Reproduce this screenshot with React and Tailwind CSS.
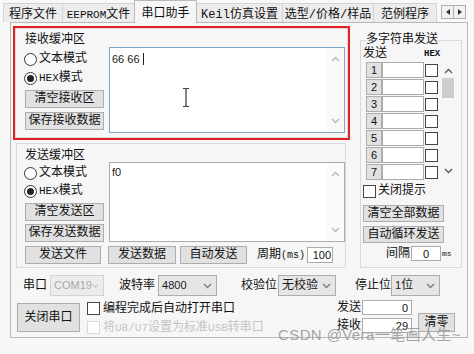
import React from 'react';

function ChevUp({ color = '#a8a8a8' }) {
  return (
    <svg width="9" height="6" viewBox="0 0 9 6">
      <path d="M1 5 L4.5 1.5 L8 5" fill="none" stroke={color} strokeWidth="1.3" />
    </svg>
  );
}

function ChevDown({ color = '#a8a8a8' }) {
  return (
    <svg width="9" height="6" viewBox="0 0 9 6">
      <path d="M1 1 L4.5 4.5 L8 1" fill="none" stroke={color} strokeWidth="1.3" />
    </svg>
  );
}

function Btn({ className = '', children }) {
  return (
    <div className={'flex shrink-0 items-center justify-center border border-[#adadad] bg-[#e1e1e1] ' + className}>
      {children}
    </div>
  );
}

function Radio({ checked, children }) {
  return (
    <div className="flex h-[18px] items-center">
      <span className="flex h-[13px] w-[13px] items-center justify-center rounded-full border border-[#333333] bg-white">
        {checked && <span className="h-[7px] w-[7px] rounded-full bg-[#222222]" />}
      </span>
      <span className="ml-[2px]">{children}</span>
    </div>
  );
}

function Check({ disabled }) {
  return (
    <span
      className={
        disabled
          ? 'block h-[13px] w-[13px] shrink-0 border border-[#d9d9d9] bg-white'
          : 'block h-[13px] w-[13px] shrink-0 border border-[#444444] bg-white'
      }
    />
  );
}

function Hex() {
  return <span className="font-['Liberation_Mono',monospace] text-[11px]">HEX</span>;
}

function TextBox({ className = '', focused, children }) {
  return (
    <div
      className={
        'relative flex shrink-0 bg-white border ' +
        (focused ? 'border-[#7fa4c9] ' : 'border-[#ababab] ') +
        className
      }
    >
      <div className="flex-1 px-[2px] pt-[3px] font-['Liberation_Sans',sans-serif] text-[11px] leading-[13px] text-[#222222]">
        {children}
      </div>
      <div className="flex w-[17px] flex-col items-center justify-between bg-[#fafafa] py-[8px]">
        <ChevUp color="#b4b4b4" />
        <ChevDown color="#b4b4b4" />
      </div>
    </div>
  );
}

function Combo({ className = '', disabled, children }) {
  return (
    <div
      className={
        'flex h-[21px] shrink-0 items-center justify-between border pl-[3px] pr-[4px] ' +
        (disabled ? 'border-[#d2d2d2] bg-[#ececec] text-[#a9a9a9] ' : 'border-[#adadad] bg-[#e6e6e6] text-[#1a1a1a] ') +
        className
      }
    >
      <span>{children}</span>
      <ChevDown color={disabled ? '#c4c4c4' : '#7a7a7a'} />
    </div>
  );
}

function Tab({ active, className = '', children }) {
  if (active) {
    return (
      <div
        className={
          'relative z-10 -mb-px -ml-px flex h-[23px] items-start justify-center border border-b-0 border-[#b9b9b9] bg-[#f6f6f6] pt-[6px] ' +
          className
        }
      >
        {children}
      </div>
    );
  }
  return (
    <div
      className={
        '-ml-px flex h-[19px] items-start justify-center border border-b-0 border-[#d3d3d3] bg-[#ececec] pt-[4px] ' +
        className
      }
    >
      {children}
    </div>
  );
}

const Sans = ({ children, className = '' }) => (
  <span className={"font-['Liberation_Sans',sans-serif] text-[11px] " + className}>{children}</span>
);

export default function App() {
  return (
    <div className="relative h-[354px] w-[474px] overflow-hidden bg-[#f8f8f8] font-['Liberation_Mono','Noto_Sans_CJK_SC',monospace] text-[12px] leading-[14px] text-[#111111]">
      {/* Tab bar */}
      <div className="flex h-[22px] items-end pl-[4px]">
        <Tab className="w-[60px]">程序文件</Tab>
        <Tab className="w-[73px]">
          <span className="text-[11px]">EEPROM</span>文件
        </Tab>
        <Tab active className="w-[63px]">串口助手</Tab>
        <Tab className="w-[87px]">Keil仿真设置</Tab>
        <Tab className="w-[92px]">选型/价格/样品</Tab>
        <Tab className="w-[64px]">范例程序</Tab>
        <div className="mb-[3px] ml-[4px] flex self-end">
          <div className="flex h-[14px] w-[13px] items-center justify-center border border-[#b0b0b0] bg-[#f2f2f2]">
            <svg width="4" height="6" viewBox="0 0 4 6">
              <path d="M4 0 L0 3 L4 6 Z" fill="#333" />
            </svg>
          </div>
          <div className="-ml-px flex h-[14px] w-[13px] items-center justify-center border border-[#b0b0b0] bg-[#f2f2f2]">
            <svg width="4" height="6" viewBox="0 0 4 6">
              <path d="M0 0 L4 3 L0 6 Z" fill="#333" />
            </svg>
          </div>
        </div>
      </div>

      {/* Panel */}
      <div className="ml-[10px] flex h-[316px] w-[458px] flex-col border border-[#b9b9b9] bg-[#f6f6f6]">
        {/* Top section */}
        <div className="flex h-[245px] shrink-0">
          {/* Left column */}
          <div className="flex w-[339px] flex-col pl-[2px] pt-[3px]">
            {/* Receive group inside red annotation */}
            <div className="h-[114px] w-[337px] border-2 border-[#e42121]">
              <div className="flex h-full border border-[#d9d9d9]">
                <div className="flex w-[93px] flex-col pl-[8px] pt-[4px]">
                  <div className="ml-[1px] h-[14px]">接收缓冲区</div>
                  <div className="mt-[3px]">
                    <Radio>文本模式</Radio>
                  </div>
                  <div className="mt-[1px]">
                    <Radio checked>
                      <Hex />模式
                    </Radio>
                  </div>
                  <Btn className="ml-[1px] mt-[3px] h-[18px] w-[79px]">清空接收区</Btn>
                  <Btn className="ml-[1px] mt-[4px] h-[18px] w-[79px]">保存接收数据</Btn>
                </div>
                <TextBox focused className="mt-[18px] h-[86px] w-[236px]">
                  <span>66 66 </span>
                  <span className="inline-block h-[12px] w-px translate-y-[2px] bg-[#222222] align-baseline" />
                  <svg
                    className="absolute left-[72px] top-[39px]"
                    width="8"
                    height="21"
                    viewBox="0 0 8 21"
                  >
                    <path d="M1 1.5 H3 Q4 1.5 4 3 V18 Q4 19.5 3 19.5 H1 M7 1.5 H5 Q4 1.5 4 3 M4 18 Q4 19.5 5 19.5 H7" fill="none" stroke="#333" strokeWidth="1.2" />
                  </svg>
                </TextBox>
              </div>
            </div>

            {/* Send group */}
            <div className="ml-[3px] mt-[3px] flex h-[125px] w-[330px] flex-col border border-[#d9d9d9] pl-[7px] pt-[5px]">
              <div className="flex">
                <div className="flex w-[85px] flex-col">
                  <div className="ml-[1px] h-[14px]">发送缓冲区</div>
                  <div className="mt-[1px]">
                    <Radio>文本模式</Radio>
                  </div>
                  <Radio checked>
                    <Hex />模式
                  </Radio>
                  <Btn className="ml-[1px] mt-[3px] h-[18px] w-[79px]">清空发送区</Btn>
                  <Btn className="ml-[1px] mt-[3px] h-[18px] w-[79px]">保存发送数据</Btn>
                </div>
                <TextBox className="mt-[13px] h-[80px] w-[236px]">f0</TextBox>
              </div>
              <div className="mt-[4px] flex h-[18px] items-center">
                <Btn className="ml-[1px] h-[18px] w-[76px]">发送文件</Btn>
                <Btn className="ml-[7px] h-[18px] w-[68px]">发送数据</Btn>
                <Btn className="ml-[4px] h-[18px] w-[67px]">自动发送</Btn>
                <span className="ml-[10px]">
                  周期<span className="text-[10px]">(ms)</span>
                </span>
                <div className="ml-[2px] flex h-[16px] w-[26px] items-center justify-end border border-[#ababab] bg-white pr-[1px]">
                  <Sans>100</Sans>
                </div>
              </div>
            </div>
          </div>

          {/* Right column: multi-string send */}
          <fieldset className="ml-[10px] mt-[10px] h-[235px] w-[102px] border border-[#d9d9d9] p-0">
            <legend className="ml-[5px] h-[14px] p-0 leading-[14px]">多字符串发送</legend>
            <div className="flex h-[14px] items-center pl-[2px]">
              <span className="w-[61px]">发送</span>
              <span className="font-['Liberation_Mono',monospace] text-[9px] font-bold">HEX</span>
            </div>
            <div className="mt-[1px] flex pl-[5px]">
              <div className="flex flex-col gap-[1px]">
                {[1, 2, 3, 4, 5, 6, 7].map((n) => (
                  <div key={n} className="flex h-[16px] items-center">
                    <Btn className="h-[16px] w-[16px]">
                      <Sans>{n}</Sans>
                    </Btn>
                    <div className="h-[16px] w-[42px] border border-[#ababab] bg-white" />
                    <div className="ml-[1px]">
                      <Check />
                    </div>
                  </div>
                ))}
              </div>
              <div className="ml-[4px] flex h-[118px] w-[12px] flex-col items-center">
                <div className="mt-[6px]">
                  <ChevUp color="#555" />
                </div>
                <div className="mt-[4px] h-[20px] w-[12px] bg-[#cdcdcd]" />
                <div className="flex-1" />
                <div className="mb-[6px]">
                  <ChevDown color="#555" />
                </div>
              </div>
            </div>
            <div className="mt-[3px] flex h-[16px] items-center pl-[2px]">
              <Check />
              <span className="ml-[2px]">关闭提示</span>
            </div>
            <Btn className="ml-[2px] mt-[6px] h-[17px] w-[81px]">清空全部数据</Btn>
            <Btn className="ml-[2px] mt-[4px] h-[17px] w-[81px]">自动循环发送</Btn>
            <div className="mt-[3px] flex h-[15px] items-center pl-[25px]">
              <span>间隔</span>
              <div className="ml-[1px] flex h-[15px] w-[30px] items-center justify-center border border-[#ababab] bg-white">
                <Sans>0</Sans>
              </div>
              <span className="ml-[1px] text-[8px]">ms</span>
            </div>
          </fieldset>
        </div>

        {/* Serial settings */}
        <div className="mt-[7px] flex h-[21px] items-center pl-[12px]">
          <span>串口</span>
          <Combo disabled className="ml-[3px] w-[54px]">
            <Sans>COM19</Sans>
          </Combo>
          <span className="ml-[15px]">波特率</span>
          <Combo className="ml-[3px] w-[59px]">
            <Sans>4800</Sans>
          </Combo>
          <span className="ml-[24px]">校验位</span>
          <Combo className="ml-[1px] w-[58px]">无校验</Combo>
          <span className="ml-[19px]">停止位</span>
          <Combo className="w-[49px]">
            <Sans>1</Sans>位
          </Combo>
        </div>

        <div className="mt-[4px] flex pl-[6px]">
          <Btn className="mt-[3px] h-[29px] w-[63px]">关闭串口</Btn>
          <div className="ml-[7px] flex w-[250px] flex-col">
            <div className="flex h-[17px] items-center">
              <Check />
              <span className="ml-[3px]">编程完成后自动打开串口</span>
            </div>
            <div className="mt-[2px] flex h-[17px] items-center text-[#c4c4c4]">
              <Check disabled />
              <span className="ml-[3px]">
                将<span className="text-[11px]">U8/U7</span>设置为标准<span className="text-[11px]">USB</span>转串口
              </span>
            </div>
          </div>
          <div className="flex flex-col">
            <div className="flex h-[15px] items-center">
              <span>发送</span>
              <div className="ml-[1px] flex h-[15px] w-[50px] items-center justify-end border border-[#ababab] bg-white pr-[3px]">
                <Sans>0</Sans>
              </div>
            </div>
            <div className="mt-[3px] flex h-[15px] items-center">
              <span>接收</span>
              <div className="ml-[1px] flex h-[15px] w-[50px] items-center justify-end border border-[#ababab] bg-white pr-[3px]">
                <Sans>29</Sans>
              </div>
            </div>
          </div>
          <Btn className="ml-[6px] mt-[13px] h-[19px] w-[37px]">清零</Btn>
        </div>
      </div>

      {/* Watermark */}
      <div className="pointer-events-none absolute left-[278px] top-[326px] font-['Liberation_Sans','Noto_Sans_CJK_SC',sans-serif] text-[15px] leading-[18px] tracking-[0.4px] text-[#a3a3a3]">
        CSDN @Vera一笔画人生~
      </div>
    </div>
  );
}
